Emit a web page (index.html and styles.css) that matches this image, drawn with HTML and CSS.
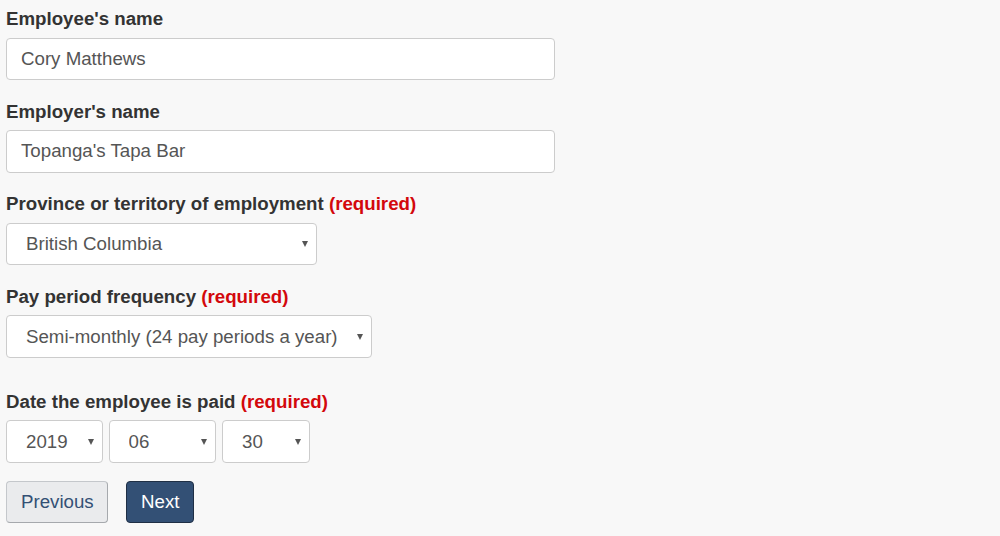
FILE: index.html
```html
<!DOCTYPE html>
<html lang="en">
<head>
<meta charset="utf-8">
<title>Payroll form</title>
<link rel="stylesheet" href="styles.css">
</head>
<body>
<form class="page">
  <div class="form-group">
    <label class="label" for="emp">Employee's name</label>
    <input class="form-control text-input" id="emp" type="text" value="Cory Matthews">
  </div>
  <div class="form-group">
    <label class="label" for="employer">Employer's name</label>
    <input class="form-control text-input" id="employer" type="text" value="Topanga's Tapa Bar">
  </div>
  <div class="form-group">
    <label class="label" for="prov">Province or territory of employment <span class="required">(required)</span></label>
    <span class="select-wrap">
      <select class="form-control select select-prov" id="prov">
        <option>British Columbia</option>
      </select>
    </span>
  </div>
  <div class="form-group">
    <label class="label" for="freq">Pay period frequency <span class="required">(required)</span></label>
    <span class="select-wrap">
      <select class="form-control select select-freq" id="freq">
        <option>Semi-monthly (24 pay periods a year)</option>
      </select>
    </span>
  </div>
  <div class="form-group date-group">
    <div class="label">Date the employee is paid <span class="required">(required)</span></div>
    <div class="date-row">
      <span class="select-wrap">
        <select class="form-control select select-year"><option>2019</option></select>
      </span>
      <span class="select-wrap">
        <select class="form-control select select-month"><option>06</option></select>
      </span>
      <span class="select-wrap">
        <select class="form-control select select-day"><option>30</option></select>
      </span>
    </div>
  </div>
  <div class="actions">
    <button type="button" class="btn btn-default">Previous</button>
    <button type="button" class="btn btn-primary">Next</button>
  </div>
</form>
</body>
</html>
```
FILE: styles.css
```css
html, body {
  margin: 0;
  padding: 0;
  background: #f8f8f8;
}

body {
  font-family: "Liberation Sans", Arial, sans-serif;
  font-size: 18.7px;
  line-height: 1.42;
  color: #333;
}

.page {
  padding: 6px 0 0 6px;
}

.form-group {
  margin-bottom: 18.5px;
}

.date-group {
  margin-top: 31px;
}

.label {
  display: block;
  font-weight: bold;
  margin-bottom: 5px;
}

.date-group .label {
  margin-bottom: 5px;
}

.required {
  color: #d3080c;
}

.form-control {
  box-sizing: border-box;
  height: 42.5px;
  border: 1px solid #ccc;
  border-radius: 4px;
  background: #fff;
  color: #555;
  font-family: "Liberation Sans", Arial, sans-serif;
  font-size: 18.7px;
  margin: 0;
  outline: none;
}

.text-input {
  display: block;
  width: 549px;
  padding: 0 14px;
}

.select-wrap {
  display: inline-block;
  position: relative;
  vertical-align: top;
}

.select-wrap::after {
  content: "";
  position: absolute;
  right: 9px;
  top: 50%;
  margin-top: -2.5px;
  border-left: 3.5px solid transparent;
  border-right: 3.5px solid transparent;
  border-top: 6px solid #555;
  pointer-events: none;
}

.select {
  display: block;
  -webkit-appearance: none;
  appearance: none;
  padding: 0 24px 0 19px;
}

.select-prov { width: 311px; }
.select-freq { width: 366px; }
.select-year { width: 96.5px; }
.select-month { width: 107.5px; }
.select-day { width: 87.5px; }

.date-row {
  display: flex;
  gap: 6px;
}

.actions {
  display: flex;
  gap: 18px;
}

.btn {
  box-sizing: border-box;
  height: 41.5px;
  padding: 0 14px;
  border-radius: 4px;
  font-family: "Liberation Sans", Arial, sans-serif;
  font-size: 18.7px;
  cursor: pointer;
}

.btn-default {
  width: 102px;
  background: #eaebed;
  color: #335075;
  border: 1px solid #c4c7cb;
  border-right-color: #a6a9ad;
  border-bottom-color: #a6a9ad;
}

.btn-primary {
  width: 68px;
  background: #335075;
  color: #fff;
  border: 1px solid #1f2f45;
}
```
